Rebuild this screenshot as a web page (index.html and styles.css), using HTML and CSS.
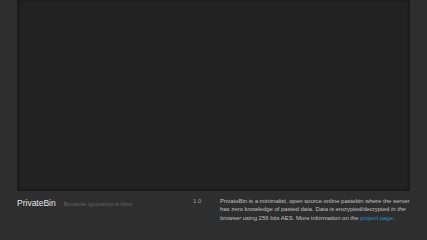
FILE: index.html
```html
<!DOCTYPE html>
<html lang="en">
<head>
<meta charset="utf-8">
<title>PrivateBin</title>
<link rel="stylesheet" href="styles.css">
</head>
<body>
<main class="container">
  <textarea class="paste" aria-label="Paste"></textarea>
  <footer class="footer">
    <div class="brand"><span class="name">PrivateBin</span> <span class="tagline">- Because ignorance is bliss</span></div>
    <div class="version">1.0</div>
    <p class="about">PrivateBin is a minimalist, open source online pastebin where the server has zero knowledge of pasted data. Data is encrypted/decrypted <i>in the browser</i> using 256 bits AES. More information on the <a href="#">project page</a>.</p>
  </footer>
</main>
</body>
</html>
```
FILE: styles.css
```css
html, body {
  margin: 0;
  padding: 0;
  background: #2e2e2e;
  font-family: "Liberation Sans", Arial, sans-serif;
}
.container {
  padding: 0 17px;
}
.paste {
  display: block;
  box-sizing: border-box;
  width: 100%;
  height: 191px;
  margin: 0;
  background: #222222;
  border: 1px solid #1a1a1a;
  border-top: 0;
  border-radius: 0 0 2px 2px;
  box-shadow: inset 0 0 3px rgba(0, 0, 0, 0.45);
  resize: none;
  outline: none;
}
.footer {
  display: flex;
  align-items: flex-start;
  padding-top: 5px;
}
.brand {
  width: 176px;
  line-height: 10px;
  white-space: nowrap;
}
.name {
  font-size: 8.5px;
  color: #e6e6e6;
}
.tagline {
  font-size: 5.8px;
  color: #646464;
}
.version {
  width: 27px;
  font-size: 5.9px;
  line-height: 10px;
  color: #a0a0a0;
}
.about {
  flex: 1;
  margin: 0;
  padding-top: 1px;
  font-size: 5.95px;
  line-height: 8.4px;
  color: #c2c2c2;
}
.about a {
  color: #2a8fc8;
  text-decoration: none;
}
```
